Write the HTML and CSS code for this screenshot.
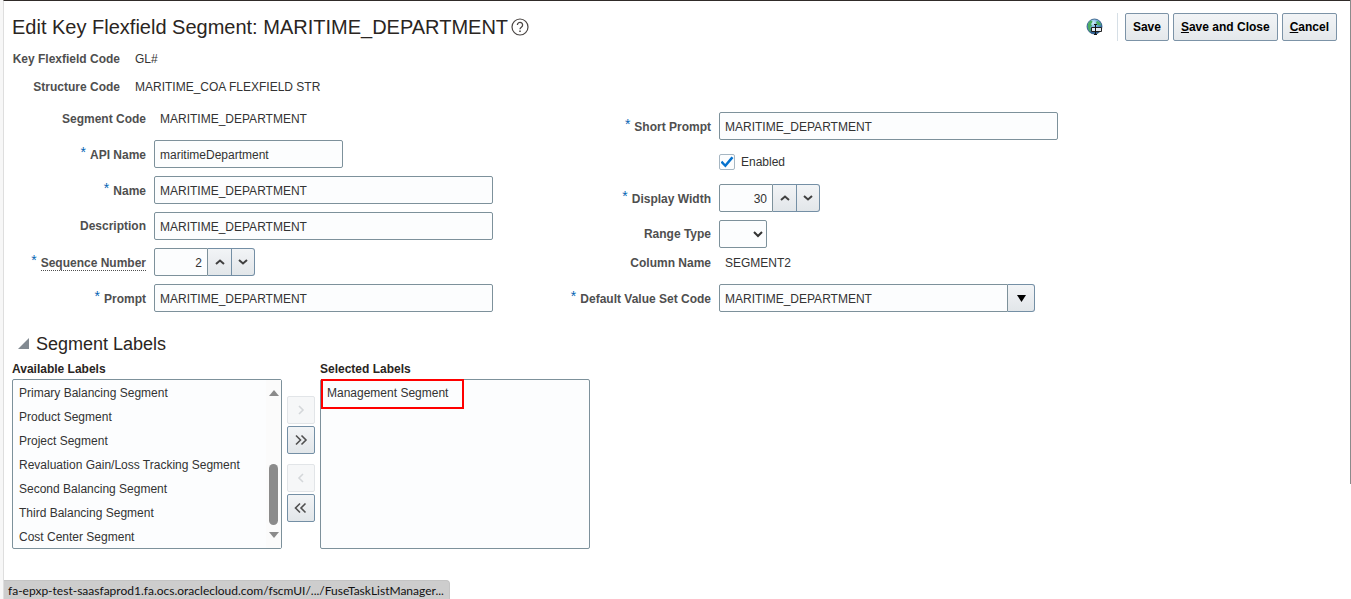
FILE: index.html
```html
<!DOCTYPE html>
<html lang="en">
<head>
<meta charset="utf-8">
<title>Edit Key Flexfield Segment</title>
<link rel="stylesheet" href="styles.css">
</head>
<body>
<main class="page">
  <header class="page-header">
    <h1>Edit Key Flexfield Segment: MARITIME_DEPARTMENT</h1>
    <button class="icon-button help" type="button" aria-label="Help">
      <svg width="18" height="18" viewBox="0 0 18 18" fill="none" stroke="#4a4543"><circle cx="9" cy="9" r="8" stroke-width="1.2"/><path d="M6.400 7a2.600 2.600 0 1 1 4.200 2c-.9.7-1.600 1.100-1.600 2.300" stroke-width="1.300"/><path d="M9 12.600v1.500" stroke-width="1.500"/></svg>
    </button>
    <div class="actions">
      <button class="icon-button globe" type="button" aria-label="Edit translations">
        <svg width="18" height="18" viewBox="0 0 18 18">
          <defs><radialGradient id="sea" cx=".4" cy=".25" r=".8"><stop offset="0" stop-color="#d4effc"/><stop offset=".5" stop-color="#5a9fd0"/><stop offset="1" stop-color="#143f78"/></radialGradient></defs>
          <circle cx="8.500" cy="8.500" r="7.500" fill="url(#sea)" stroke="#2a527c" stroke-width=".8"/>
          <path d="M2 6c1-2.500 2.500-3.500 4-3.500L6.500 4 5 6l1 2-2 1 1 2-1 3C2.500 12.500 1.500 9 2 6zM11 3c2 .5 3.500 2 4 4l-2 .5-2-1-1-2z" fill="#4cae60"/>
          <path d="M5.500 9.500h10v4h-10z" fill="#fff" fill-opacity=".85" stroke="#222"/>
          <path d="M9.500 6.500v10M8 6.500h3M8 16.500h3" fill="none" stroke="#111"/>
        </svg>
      </button>
      <button class="button" type="button">Save</button>
      <button class="button" type="button"><u>S</u>ave and Close</button>
      <button class="button" type="button"><u>C</u>ancel</button>
    </div>
  </header>

  <dl class="summary">
    <dt>Key Flexfield Code</dt><dd>GL#</dd>
    <dt>Structure Code</dt><dd>MARITIME_COA FLEXFIELD STR</dd>
  </dl>

  <form class="form">
    <div class="column left">
      <div class="row short"><span class="label">Segment Code</span><span class="value">MARITIME_DEPARTMENT</span></div>
      <div class="row"><label class="label required" for="api">API Name</label><input class="field narrow" id="api" type="text" value="maritimeDepartment"></div>
      <div class="row"><label class="label required" for="name">Name</label><input class="field" id="name" type="text" value="MARITIME_DEPARTMENT"></div>
      <div class="row"><label class="label" for="description">Description</label><input class="field" id="description" type="text" value="MARITIME_DEPARTMENT"></div>
      <div class="row"><label class="label required" for="sequence"><span class="hinted">Sequence Number</span></label>
        <div class="spinner"><input class="field" id="sequence" type="text" value="2"><button type="button" aria-label="Increase sequence number"><svg width="10" height="6" viewBox="0 0 10 6"><path d="M1 5l4-3.500L9 5"/></svg></button><button type="button" aria-label="Decrease sequence number"><svg width="10" height="6" viewBox="0 0 10 6"><path d="M1 1l4 3.500L9 1"/></svg></button></div>
      </div>
      <div class="row"><label class="label required" for="prompt">Prompt</label><input class="field" id="prompt" type="text" value="MARITIME_DEPARTMENT"></div>
    </div>
    <div class="column right">
      <div class="row"><label class="label required" for="short-prompt">Short Prompt</label><input class="field" id="short-prompt" type="text" value="MARITIME_DEPARTMENT"></div>
      <div class="row"><span class="label"></span><div class="check"><input id="enabled" type="checkbox" checked><label for="enabled">Enabled</label></div></div>
      <div class="row"><label class="label required" for="width">Display Width</label>
        <div class="spinner"><input class="field" id="width" type="text" value="30"><button type="button" aria-label="Increase display width"><svg width="10" height="6" viewBox="0 0 10 6"><path d="M1 5l4-3.500L9 5"/></svg></button><button type="button" aria-label="Decrease display width"><svg width="10" height="6" viewBox="0 0 10 6"><path d="M1 1l4 3.500L9 1"/></svg></button></div>
      </div>
      <div class="row"><label class="label" for="range">Range Type</label><select class="field range" id="range"><option></option></select></div>
      <div class="row column-name"><span class="label">Column Name</span><span class="value">SEGMENT2</span></div>
      <div class="row"><label class="label required" for="value-set">Default Value Set Code</label>
        <div class="combo"><input class="field" id="value-set" type="text" value="MARITIME_DEPARTMENT"><button type="button" aria-label="Show value sets"><svg width="9" height="7" viewBox="0 0 9 7"><path d="M0 0h9L4.500 7z"/></svg></button></div>
      </div>
    </div>
  </form>

  <section class="labels">
    <h2><button class="icon-button disclosure" type="button" aria-label="Collapse Segment Labels"><svg width="12" height="12" viewBox="0 0 12 12"><path d="M11 0v11H0z" fill="#828a91"/></svg></button>Segment Labels</h2>
    <div class="shuttle">
      <div class="list">
        <label for="available">Available Labels</label>
        <div class="list-frame">
          <select id="available" multiple size="7">
            <option>Primary Balancing Segment</option>
            <option>Product Segment</option>
            <option>Project Segment</option>
            <option>Revaluation Gain/Loss Tracking Segment</option>
            <option>Second Balancing Segment</option>
            <option>Third Balancing Segment</option>
            <option>Cost Center Segment</option>
          </select>
          <div class="scrollbar" aria-hidden="true">
            <svg width="10" height="6" viewBox="0 0 10 6"><path d="M0 6l5-6 5 6z"/></svg>
            <span class="thumb"></span>
            <svg width="10" height="6" viewBox="0 0 10 6"><path d="M0 0l5 6 5-6z"/></svg>
          </div>
        </div>
      </div>
      <div class="movers">
        <button type="button" disabled aria-label="Move selected"><svg width="14" height="12" viewBox="0 0 14 12"><path d="M5 2l4 4-4 4"/></svg></button>
        <button type="button" aria-label="Move all"><svg width="14" height="12" viewBox="0 0 14 12"><path d="M2 1.500L6.500 6 2 10.500M7.500 1.500L12 6l-4.500 4.500"/></svg></button>
        <button class="spaced" type="button" disabled aria-label="Remove selected"><svg width="14" height="12" viewBox="0 0 14 12"><path d="M9 2L5 6l4 4"/></svg></button>
        <button type="button" aria-label="Remove all"><svg width="14" height="12" viewBox="0 0 14 12"><path d="M6 1.500L1.500 6 6 10.500M11.500 1.500L7 6l4.500 4.500"/></svg></button>
      </div>
      <div class="list">
        <label for="selected">Selected Labels</label>
        <div class="list-frame">
          <select id="selected" multiple size="7"><option>Management Segment</option></select>
          <span class="callout"></span>
        </div>
      </div>
    </div>
  </section>
</main>
<div class="page-scroll" aria-hidden="true"></div>
<div class="status">fa-epxp-test-saasfaprod1.fa.ocs.oraclecloud.com/fscmUI/.../FuseTaskListManager...</div>
</body>
</html>
```

FILE: styles.css
```css
* { box-sizing: border-box; }

body {
  margin: 0;
  min-height: 100vh;
  display: flex;
  padding-left: 3px;
  background: #f7f7f7;
  color: #333;
  font: 12px/16px "Liberation Sans", Arial, sans-serif;
}

button, input, select { font: inherit; color: inherit; margin: 0; }
button { padding: 0; }
h1, h2, dl, dd { margin: 0; }

.page {
  flex: 1;
  border-left: 1px solid #dedede;
  border-top: 1px solid #302b29;
  padding: 12px 11px 0 8px;
  background: #fff;
}

.page-scroll {
  position: absolute;
  top: 0;
  right: 0;
  width: 1px;
  height: 484px;
  background: #8b8b8b;
}

.page-header { display: flex; align-items: center; height: 28px; }
h1 { font-size: 20px; line-height: 28px; font-weight: 400; color: #2a2522; white-space: nowrap; }
.icon-button { display: inline-flex; border: 0; background: none; }
.help { margin-left: 3px; }
.actions { display: flex; align-items: center; gap: 4px; margin-left: auto; margin-right: 3px; }
.globe { height: 28px; align-items: center; padding-right: 13px; margin-right: 3px; border-right: 1px solid #d6dfe6; }
.button {
  height: 28px;
  padding: 0 7px;
  border: 1px solid #7c93a7;
  border-radius: 2px;
  background: linear-gradient(#f2f4f6, #e4e8eb);
  color: #000;
  font-weight: 700;
}

.summary {
  display: grid;
  grid-template-columns: 108px auto;
  column-gap: 15px;
  row-gap: 12px;
  margin-top: 10px;
}
.summary dt { text-align: right; font-weight: 700; color: #4f4f4f; }

.form { display: flex; gap: 72px; margin-top: 12px; }
.column { display: flex; flex-direction: column; gap: 8px; }
.right { padding-top: 5px; }
.row { display: flex; align-items: center; gap: 8px; height: 28px; }
.row.short { height: 25px; padding-bottom: 1px; }
.row.column-name { height: 20px; padding-bottom: 7px; }
.label { width: 134px; text-align: right; font-weight: 700; color: #4f4f4f; white-space: nowrap; }
.right .label { width: 146px; }
.required::before { content: "*"; color: #0565b4; margin-right: 4px; font-weight: 400; font-size: 14px; vertical-align: 2px; line-height: 12px; }
.hinted { border-bottom: 1px dotted #4f4f4f; }
.value { padding-left: 6px; }

.field {
  width: 339px;
  height: 28px;
  padding: 1px 5px 0;
  border: 1px solid #7d919b;
  border-radius: 2px;
  background: #fcfdfe;
}
.narrow { width: 189px; }
.spinner, .combo { display: flex; }
.spinner .field { width: 54px; text-align: right; border-radius: 2px 0 0 2px; }
.combo .field { width: 289px; border-radius: 2px 0 0 2px; }
.spinner button, .combo button {
  display: grid;
  place-items: center;
  width: 24px;
  height: 28px;
  border: 1px solid #748fa5;
  border-left: 0;
  background: linear-gradient(#f2f4f6, #e2e6e9);
}
.spinner button:last-child, .combo button { border-radius: 0 3px 3px 0; }
.spinner button:last-child { width: 23px; }
.combo button { width: 27px; }
.spinner path { fill: none; stroke: #404040; stroke-width: 2; }
.range { width: 48px; padding: 0; color: #333; }

.check { display: flex; align-items: center; gap: 6px; }
.check input {
  appearance: none;
  display: grid;
  place-items: center;
  width: 16px;
  height: 16px;
  border: 1px solid #a6b6c2;
  border-radius: 2px;
  background: #fcfdfe;
}
.check input::before {
  content: "";
  width: 13px;
  height: 12px;
  background: #0572ce;
  clip-path: polygon(0 54%, 14% 40%, 36% 66%, 84% 5%, 100% 17%, 38% 96%);
}

.labels { margin-top: 21px; }
h2 { display: flex; align-items: center; font-size: 18px; line-height: 22px; font-weight: 400; color: #2a2522; }
.disclosure { margin: 0 6px; }
.shuttle { display: flex; gap: 5px; margin-top: 6px; }
.list > label { display: block; height: 18px; font-weight: 700; color: #2a2522; }
.list-frame { position: relative; width: 270px; }
.list select {
  display: block;
  width: 100%;
  height: 170px;
  padding: 2px 0 0;
  border: 1px solid #7d919b;
  border-radius: 2px;
  background: #fcfdfe;
  overflow: hidden;
}
.list option { min-height: 24px; padding: 4px 6px; line-height: 16px; }
.scrollbar {
  position: absolute;
  inset: 1px 1px 1px auto;
  width: 15px;
  display: flex;
  flex-direction: column;
  align-items: center;
  padding: 10px 0;
  background: #fbfbfb;
  fill: #8b8b8b;
}
.thumb { width: 9px; height: 61px; margin: auto 0 7px; border-radius: 5px; background: #8b8b8b; }
.callout { position: absolute; top: 0; left: 1px; width: 143px; height: 30px; border: 2px solid #f00; pointer-events: none; }

.movers { display: flex; flex-direction: column; gap: 2px; padding-top: 35px; }
.movers button {
  display: grid;
  place-items: center;
  width: 28px;
  height: 28px;
  border: 1px solid #748fa5;
  border-radius: 2px;
  background: linear-gradient(#f2f4f6, #e2e6e9);
}
.movers button:disabled { border-color: #e2e5e8; background: #f6f7f8; }
.movers .spaced { margin-top: 8px; }
.movers path { fill: none; stroke: #505050; stroke-width: 1.6; }
.movers button:disabled path { stroke: #d4d7da; }

.status {
  position: fixed;
  left: 4px;
  bottom: 0;
  height: 19px;
  padding: 0 5px 0 4px;
  border: 1px solid #c4c4c4;
  border-width: 1px 1px 0 0;
  border-radius: 0 4px 0 0;
  background: #cdcdcd;
  color: #111;
  font: 12px/19px Lato, "Open Sans", sans-serif;
}
```
